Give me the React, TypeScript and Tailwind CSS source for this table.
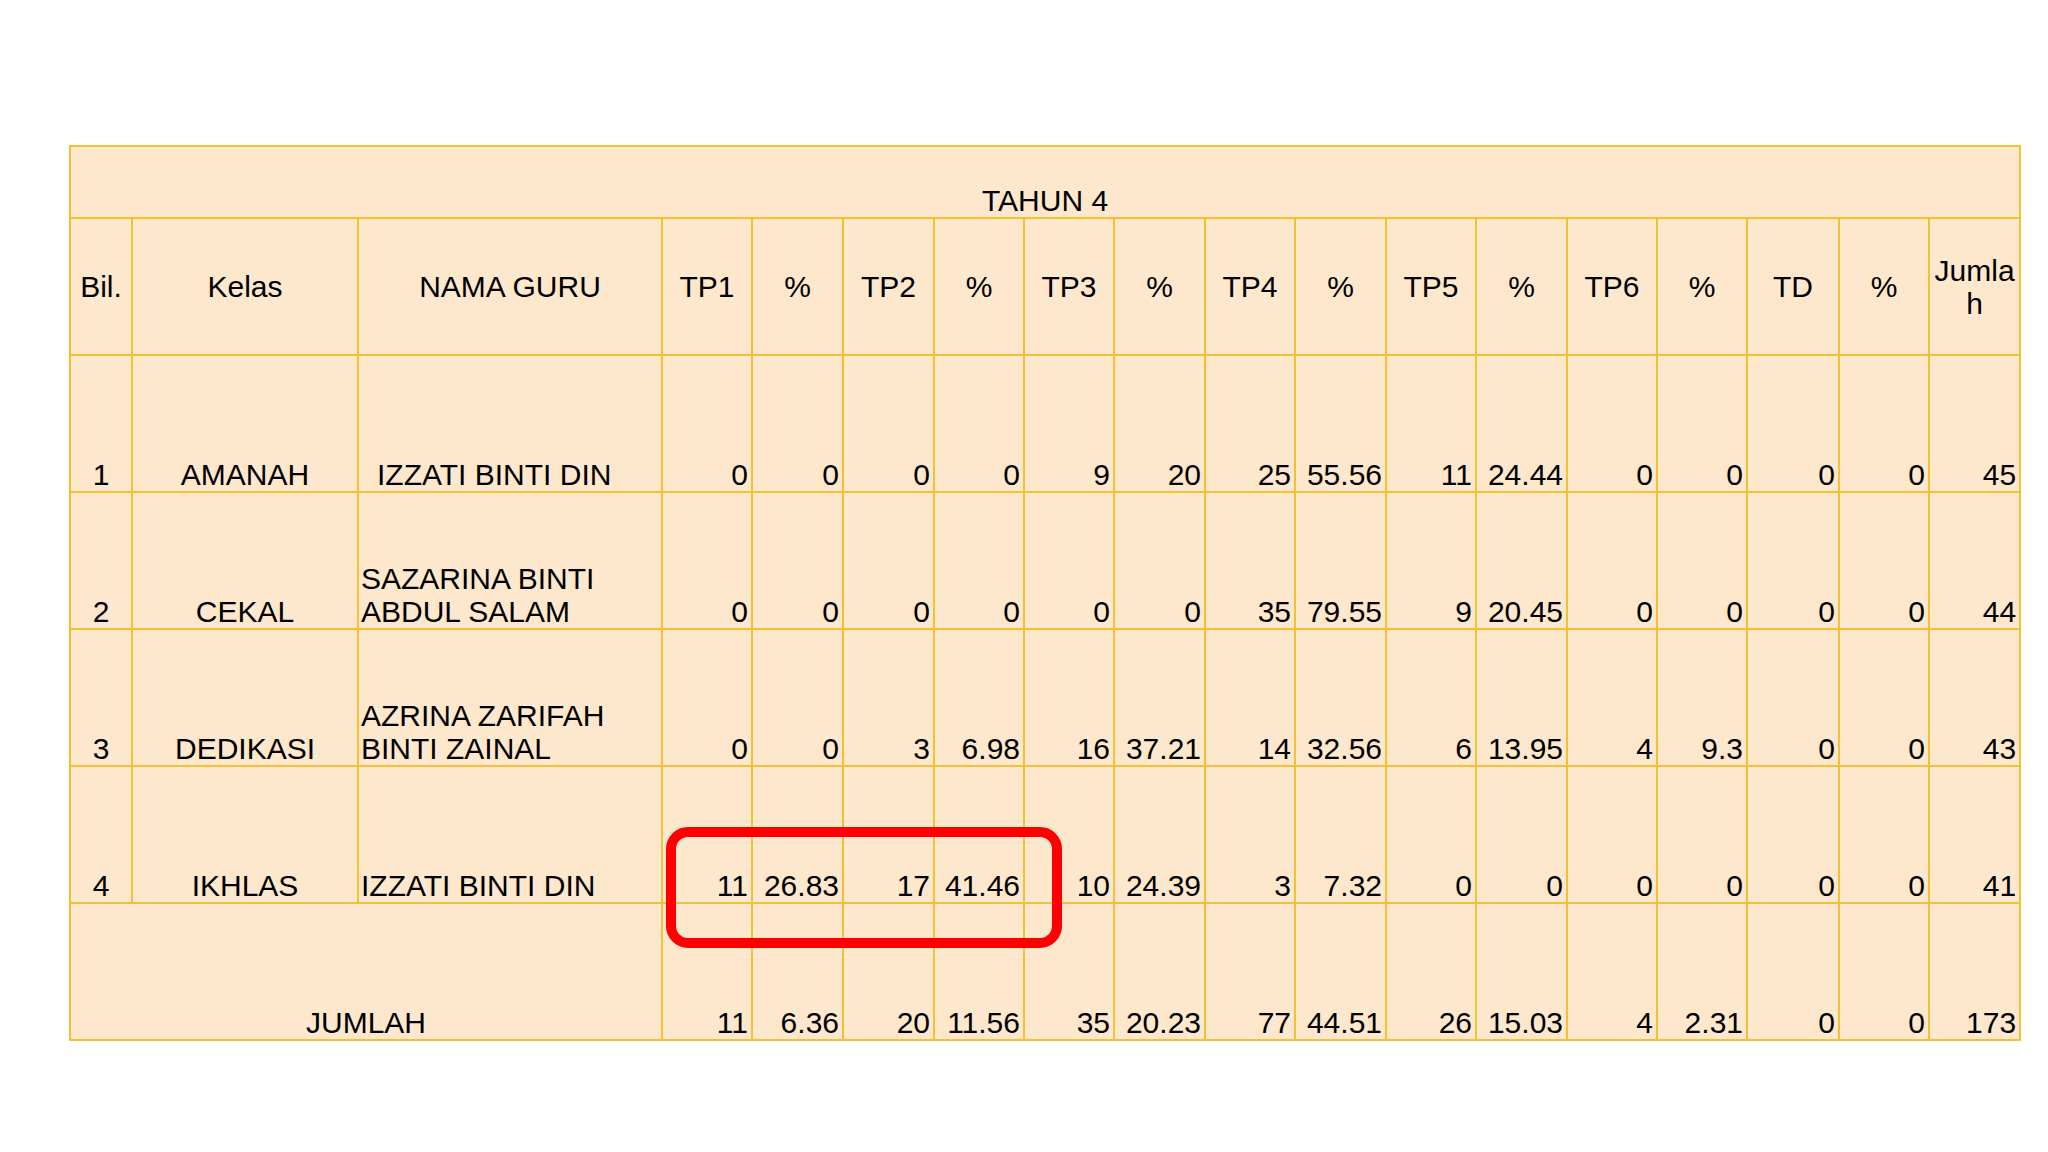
const widths = [62, 226, 304, 90, 91, 91, 90, 90, 91, 90, 91, 90, 91, 90, 90, 92, 90, 91];

const headers = ["TP1", "%", "TP2", "%", "TP3", "%", "TP4", "%", "TP5", "%", "TP6", "%", "TD", "%"];

type Row = {
  bil: string;
  kelas: string;
  guru: string[];
  indent?: boolean;
  values: string[];
};

const rows: Row[] = [
  {
    bil: "1",
    kelas: "AMANAH",
    guru: ["IZZATI BINTI DIN"],
    indent: true,
    values: ["0", "0", "0", "0", "9", "20", "25", "55.56", "11", "24.44", "0", "0", "0", "0", "45"],
  },
  {
    bil: "2",
    kelas: "CEKAL",
    guru: ["SAZARINA BINTI", "ABDUL SALAM"],
    values: ["0", "0", "0", "0", "0", "0", "35", "79.55", "9", "20.45", "0", "0", "0", "0", "44"],
  },
  {
    bil: "3",
    kelas: "DEDIKASI",
    guru: ["AZRINA ZARIFAH", "BINTI ZAINAL"],
    values: ["0", "0", "3", "6.98", "16", "37.21", "14", "32.56", "6", "13.95", "4", "9.3", "0", "0", "43"],
  },
  {
    bil: "4",
    kelas: "IKHLAS",
    guru: ["IZZATI BINTI DIN"],
    values: ["11", "26.83", "17", "41.46", "10", "24.39", "3", "7.32", "0", "0", "0", "0", "0", "0", "41"],
  },
];

const totals = ["11", "6.36", "20", "11.56", "35", "20.23", "77", "44.51", "26", "15.03", "4", "2.31", "0", "0", "173"];

const cell = "border-2 border-[#f3c232] p-0";

export default function App() {
  return (
    <div className="min-h-screen bg-white pl-[69px] pt-[145px] text-black [font-family:'Liberation_Sans',Arial,sans-serif]">
      <div className="relative w-[1950px]">
        <table className="w-[1950px] table-fixed border-collapse border-2 border-[#f3c232] bg-[#fde8cd] text-[30px] leading-[33px]">
          <colgroup>
            {widths.map((w, i) => (
              <col key={i} style={{ width: w }} />
            ))}
          </colgroup>
          <tbody>
            <tr className="h-[72px]">
              <td colSpan={18} className={`${cell} text-center align-bottom`}>
                TAHUN 4
              </td>
            </tr>

            <tr className="h-[137px]">
              <td className={`${cell} text-center align-middle`}>Bil.</td>
              <td className={`${cell} text-center align-middle`}>Kelas</td>
              <td className={`${cell} text-center align-middle`}>NAMA GURU</td>
              {headers.map((h, i) => (
                <td key={i} className={`${cell} text-center align-middle`}>
                  {h}
                </td>
              ))}
              <td className={`${cell} text-center align-middle`}>
                Jumla
                <br />h
              </td>
            </tr>

            {rows.map((r) => (
              <tr key={r.bil} className="h-[137px]">
                <td className={`${cell} text-center align-bottom`}>{r.bil}</td>
                <td className={`${cell} text-center align-bottom`}>{r.kelas}</td>
                <td className={`${cell} align-bottom ${r.indent ? "pl-[18px]" : "pl-[2px]"}`}>
                  {r.guru.map((line, i) => (
                    <div key={i}>{line}</div>
                  ))}
                </td>
                {r.values.map((v, i) => (
                  <td key={i} className={`${cell} pr-[3px] text-right align-bottom`}>
                    {v}
                  </td>
                ))}
              </tr>
            ))}

            <tr className="h-[137px]">
              <td colSpan={3} className={`${cell} text-center align-bottom`}>
                JUMLAH
              </td>
              {totals.map((v, i) => (
                <td key={i} className={`${cell} pr-[3px] text-right align-bottom`}>
                  {v}
                </td>
              ))}
            </tr>
          </tbody>
        </table>

        {/* red highlight over TP1 / TP2 of IKHLAS */}
        <div className="pointer-events-none absolute left-[597px] top-[682px] h-[121px] w-[396px] rounded-[22px] border-[10px] border-[#ff0000]" />
      </div>
    </div>
  );
}
